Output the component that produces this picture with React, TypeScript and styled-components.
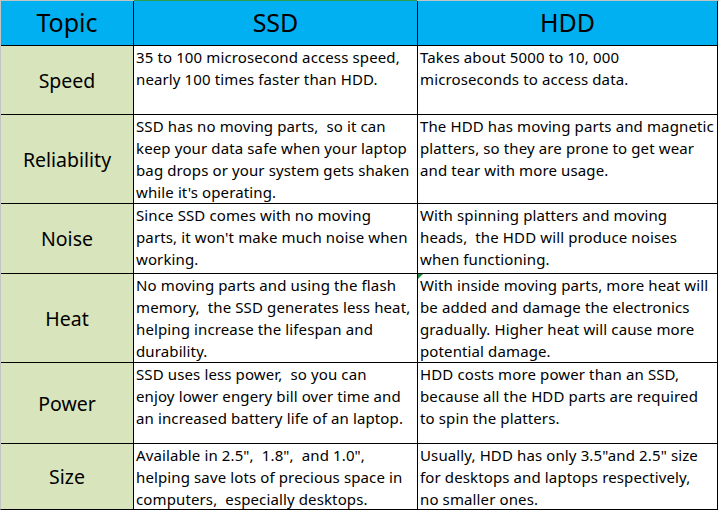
import React from 'react'
import styled, { createGlobalStyle } from 'styled-components'

const GlobalStyle = createGlobalStyle`
	html, body {
		margin: 0;
		padding: 0;
		background: #ffffff;
	}
	body {
		font-family: 'Noto Sans', 'Liberation Sans', sans-serif;
		color: #000;
	}
`

const Sheet = styled.div`
	width: 719px;
	height: 512px;
	overflow: hidden;
	background: #fff;
`

const TopEdge = styled.div`
	display: grid;
	grid-template-columns: 134px 283px 302px;
	height: 1px;
	& > span:nth-child(1),
	& > span:nth-child(3) {
		background: #c4c4c4;
	}
	& > span:nth-child(2) {
		background: #2e9e4a;
	}
`

const Table = styled.div`
	display: grid;
	grid-template-columns: 132px 283px 299px;
	grid-template-rows: 44px 68px 88px 69px 88px 80px 65px;
	gap: 1px;
	background: #000;
	border-left: 1px solid #c4c4c4;
	border-right: 1px solid #000;
	border-bottom: 1px solid #000;
	box-sizing: content-box;
	width: 716px;
`

const Head = styled.div`
	background: #00b0f0;
	display: flex;
	align-items: center;
	justify-content: center;
	font-size: 25px;
	line-height: 1;
	padding-bottom: 1px;
`

const Label = styled.div`
	background: #d8e4bc;
	display: flex;
	align-items: center;
	justify-content: center;
	font-size: 19.5px;
`

const Cell = styled.div<{ $flag?: boolean }>`
	position: relative;
	background: #fff;
	padding: 0 0 0 2px;
	font-size: 15px;
	letter-spacing: 0.12px;
	line-height: 22px;
	white-space: pre;
	overflow: hidden;
	${({ $flag }) =>
		$flag &&
		`
		&::before {
			content: '';
			position: absolute;
			left: 0;
			top: 0;
			border-top: 5px solid #1e8e3e;
			border-right: 5px solid transparent;
		}
	`}
`

type Row = {
	topic: string
	ssd: string[]
	hdd: string[]
	flag?: boolean
}

const rows: Row[] = [
	{
		topic: 'Speed',
		ssd: ['35 to 100 microsecond access speed,', 'nearly 100 times faster than HDD.'],
		hdd: ['Takes about 5000 to 10, 000', 'microseconds to access data.'],
	},
	{
		topic: 'Reliability',
		ssd: [
			'SSD has no moving parts,  so it can',
			'keep your data safe when your laptop',
			'bag drops or your system gets shaken',
			"while it's operating.",
		],
		hdd: [
			'The HDD has moving parts and magnetic',
			'platters, so they are prone to get wear',
			'and tear with more usage.',
		],
	},
	{
		topic: 'Noise',
		ssd: ['Since SSD comes with no moving', "parts, it won't make much noise when", 'working.'],
		hdd: ['With spinning platters and moving', 'heads,  the HDD will produce noises', 'when functioning.'],
	},
	{
		topic: 'Heat',
		ssd: [
			'No moving parts and using the flash',
			'memory,  the SSD generates less heat,',
			'helping increase the lifespan and',
			'durability.',
		],
		hdd: [
			'With inside moving parts, more heat will',
			'be added and damage the electronics',
			'gradually. Higher heat will cause more',
			'potential damage.',
		],
		flag: true,
	},
	{
		topic: 'Power',
		ssd: [
			'SSD uses less power,  so you can',
			'enjoy lower engery bill over time and',
			'an increased battery life of an laptop.',
		],
		hdd: [
			'HDD costs more power than an SSD,',
			'because all the HDD parts are required',
			'to spin the platters.',
		],
	},
	{
		topic: 'Size',
		ssd: [
			'Available in 2.5",  1.8",  and 1.0",',
			'helping save lots of precious space in',
			'computers,  especially desktops.',
		],
		hdd: [
			'Usually, HDD has only 3.5"and 2.5" size',
			'for desktops and laptops respectively,',
			'no smaller ones.',
		],
	},
]

const App = () => (
	<Sheet>
		<GlobalStyle />
		<TopEdge>
			<span />
			<span />
			<span />
		</TopEdge>
		<Table>
			<Head>Topic</Head>
			<Head>SSD</Head>
			<Head>HDD</Head>
			{rows.map((row) => (
				<React.Fragment key={row.topic}>
					<Label>{row.topic}</Label>
					<Cell>{row.ssd.join('\n')}</Cell>
					<Cell $flag={row.flag}>{row.hdd.join('\n')}</Cell>
				</React.Fragment>
			))}
		</Table>
	</Sheet>
)

export default App
